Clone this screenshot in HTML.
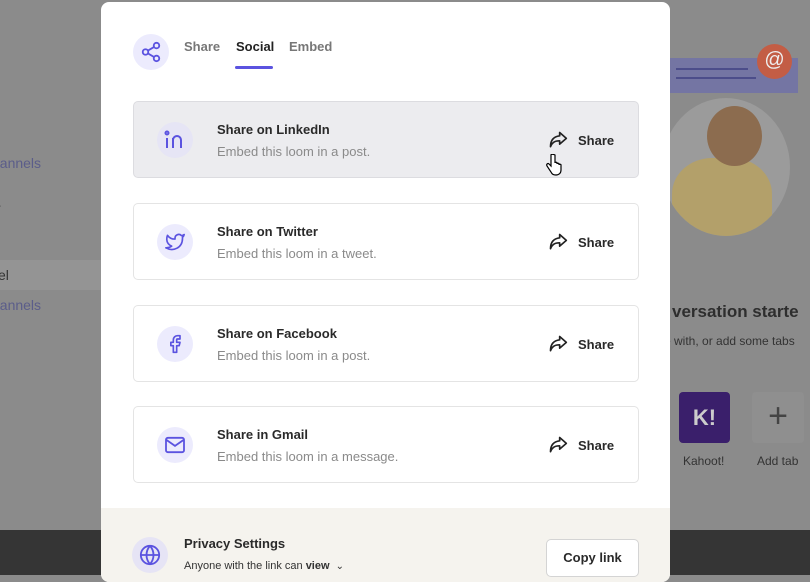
<!DOCTYPE html>
<html><head><meta charset="utf-8"><style>
*{margin:0;padding:0;box-sizing:border-box}
body{width:810px;height:575px;overflow:hidden;position:relative;background:#8b8b8b;font-family:"Liberation Sans",sans-serif}
.bg{position:absolute;color:#5b5d8a;font-size:14px}
.modal{position:absolute;left:101px;top:2px;width:569px;height:580px;background:#fff;border-radius:8px;overflow:hidden}
.card{position:absolute;left:32px;width:506px;height:77px;border:1px solid #e4e4e4;border-radius:5px;background:#fff}
.card.h{background:#ececef;border-color:#dcdce0}
.ic{position:absolute;left:23px;top:20px;width:36px;height:36px;border-radius:50%;background:#ecebfd;display:flex;align-items:center;justify-content:center}
.t{position:absolute;left:83px;top:20px;font-size:13px;font-weight:bold;color:#2a2a2a}
.s{position:absolute;left:83px;top:42px;font-size:13px;color:#8a8a8a}
.sh{position:absolute;left:414px;top:28px;display:flex;align-items:center;font-size:13px;font-weight:bold;color:#2a2a2a}
.sh svg{margin-right:10px}
</style></head><body>
<div class="bg" style="left:-8px;top:155px">hannels</div>
<div class="bg" style="left:-4px;top:200px;color:#444">r</div>
<div style="position:absolute;left:0;top:260px;width:101px;height:30px;background:#949494"></div>
<div class="bg" style="left:-2px;top:267px;color:#333">el</div>
<div class="bg" style="left:-8px;top:297px">hannels</div>
<div style="position:absolute;left:0;top:530px;width:810px;height:45px;background:#353535"></div>
<!-- right side illustration -->
<div style="position:absolute;left:670px;top:58px;width:128px;height:35px;background:#7475a3"></div>
<div style="position:absolute;left:676px;top:68px;width:72px;height:2px;background:#4c4d8a"></div>
<div style="position:absolute;left:676px;top:77px;width:80px;height:2px;background:#4c4d8a"></div>
<div style="position:absolute;left:757px;top:44px;width:35px;height:35px;border-radius:50%;background:#c35d45;color:#eee;font-size:20px;text-align:center;line-height:33px">@</div>
<div style="position:absolute;left:662px;top:98px;width:128px;height:138px;border-radius:50%;background:#9b9b9b;overflow:hidden">
<div style="position:absolute;left:10px;top:60px;width:100px;height:90px;background:#b3a06a;border-radius:40% 40% 0 0"></div>
<div style="position:absolute;left:45px;top:8px;width:55px;height:60px;background:#8c6c4f;border-radius:50%"></div>
</div>
<div style="position:absolute;left:672px;top:302px;font-size:17px;font-weight:bold;color:#2e2e2e;white-space:nowrap">versation starte</div>
<div style="position:absolute;left:664px;top:334px;font-size:12px;color:#333;white-space:nowrap">e with, or add some tabs</div>
<div style="position:absolute;left:679px;top:392px;width:51px;height:51px;border-radius:4px;background:#3a1f6b;color:#ccc;font-weight:bold;font-size:22px;text-align:center;line-height:51px">K!</div>
<div style="position:absolute;left:752px;top:392px;width:52px;height:51px;border-radius:4px;background:#8f8f8f;color:#444;font-size:34px;text-align:center;line-height:48px;font-weight:100">+</div>
<div style="position:absolute;left:683px;top:454px;font-size:12px;color:#333">Kahoot!</div>
<div style="position:absolute;left:757px;top:454px;font-size:12px;color:#333">Add tab</div>

<div class="modal">
<div style="position:absolute;left:32px;top:32px;width:36px;height:36px;border-radius:50%;background:#ecebfd;display:flex;align-items:center;justify-content:center">
<svg width="22" height="22" viewBox="0 0 24 24" fill="none" stroke="#5b53e0" stroke-width="2"><circle cx="18" cy="5" r="3"/><circle cx="6" cy="12" r="3"/><circle cx="18" cy="19" r="3"/><path d="M8.6 13.5l6.8 4M15.4 6.5l-6.8 4"/></svg></div>
<div style="position:absolute;left:83px;top:37px;font-size:13px;font-weight:bold;color:#777">Share</div>
<div style="position:absolute;left:135px;top:37px;font-size:13px;font-weight:bold;color:#222">Social</div>
<div style="position:absolute;left:134px;top:64px;width:38px;height:3px;background:#5b53e0;border-radius:2px"></div>
<div style="position:absolute;left:188px;top:37px;font-size:13px;font-weight:bold;color:#777">Embed</div>

<div class="card h" style="top:99px"><div class="ic" style="background:#e6e5f5"><svg width="22" height="20" viewBox="0 0 22 20" fill="none" stroke="#5b53e0" stroke-width="2"><circle cx="3" cy="3" r="1.5"/><path d="M3 8v10M9 18V10a4 4 0 0 1 8 0v8M9 8v10"/></svg></div><div class="t">Share on LinkedIn</div><div class="s">Embed this loom in a post.</div><div class="sh"><svg width="20" height="20" viewBox="0 0 24 24" fill="none" stroke="#222" stroke-width="2" stroke-linejoin="round"><path d="M14 3l8 7-8 7v-4c-6 0-9 2-11 7 0-7 3-12 11-13z"/></svg>Share</div>
<svg style="position:absolute;left:412px;top:52px" width="16" height="22" viewBox="0 0 16 22"><path d="M5 1v11l-2-2c-1-1-3 0-2 2l4 6c1 2 2 3 5 3s5-2 5-5v-5c0-1-2-1-2 0v-1c0-1-2-1-2 0v-1c0-1-2-1-2 0V1C7 0 5 0 5 1z" fill="#fff" stroke="#000" stroke-width="1.2"/></svg></div>

<div class="card" style="top:201px"><div class="ic"><svg width="22" height="20" viewBox="0 0 24 24" fill="none" stroke="#5b53e0" stroke-width="2" stroke-linejoin="round"><path d="M23 3a10.9 10.9 0 0 1-3.1 1.5 4.5 4.5 0 0 0-7.9 3v1A10.7 10.7 0 0 1 3 4s-4 9 5 13a11.6 11.6 0 0 1-7 2c9 5 20 0 20-11.5 0-.3 0-.6-.1-.8A7.7 7.7 0 0 0 23 3z"/></svg></div><div class="t">Share on Twitter</div><div class="s">Embed this loom in a tweet.</div><div class="sh"><svg width="20" height="20" viewBox="0 0 24 24" fill="none" stroke="#222" stroke-width="2" stroke-linejoin="round"><path d="M14 3l8 7-8 7v-4c-6 0-9 2-11 7 0-7 3-12 11-13z"/></svg>Share</div></div>

<div class="card" style="top:303px"><div class="ic"><svg width="20" height="22" viewBox="0 0 24 24" fill="none" stroke="#5b53e0" stroke-width="2" stroke-linejoin="round"><path d="M18 2h-3a5 5 0 0 0-5 5v3H7v4h3v8h4v-8h3l1-4h-4V7a1 1 0 0 1 1-1h3z"/></svg></div><div class="t">Share on Facebook</div><div class="s">Embed this loom in a post.</div><div class="sh"><svg width="20" height="20" viewBox="0 0 24 24" fill="none" stroke="#222" stroke-width="2" stroke-linejoin="round"><path d="M14 3l8 7-8 7v-4c-6 0-9 2-11 7 0-7 3-12 11-13z"/></svg>Share</div></div>

<div class="card" style="top:404px"><div class="ic"><svg width="22" height="18" viewBox="0 0 24 20" fill="none" stroke="#5b53e0" stroke-width="2"><rect x="2" y="2" width="20" height="16" rx="2"/><path d="M2 4l10 7 10-7"/></svg></div><div class="t">Share in Gmail</div><div class="s">Embed this loom in a message.</div><div class="sh"><svg width="20" height="20" viewBox="0 0 24 24" fill="none" stroke="#222" stroke-width="2" stroke-linejoin="round"><path d="M14 3l8 7-8 7v-4c-6 0-9 2-11 7 0-7 3-12 11-13z"/></svg>Share</div></div>

<div style="position:absolute;left:0;top:506px;width:569px;height:80px;background:#f5f3ee">
<div style="position:absolute;left:31px;top:29px;width:36px;height:36px;border-radius:50%;background:#e6e4f5;display:flex;align-items:center;justify-content:center"><svg width="22" height="22" viewBox="0 0 24 24" fill="none" stroke="#5b53e0" stroke-width="2"><circle cx="12" cy="12" r="10"/><path d="M2 12h20M12 2a15 15 0 0 1 0 20M12 2a15 15 0 0 0 0 20"/></svg></div>
<div style="position:absolute;left:83px;top:28px;font-size:13px;font-weight:bold;color:#2a2a2a">Privacy Settings</div>
<div style="position:absolute;left:83px;top:52px;font-size:11px;color:#333">Anyone with the link can <b>view</b> &nbsp;<span style="font-size:10px">&#8964;</span></div>
<div style="position:absolute;left:445px;top:31px;width:93px;height:38px;border:1px solid #d4d4d4;border-radius:5px;background:#fff;font-size:13px;font-weight:bold;color:#2a2a2a;text-align:center;line-height:35px">Copy link</div>
</div>
</div>
</body></html>
